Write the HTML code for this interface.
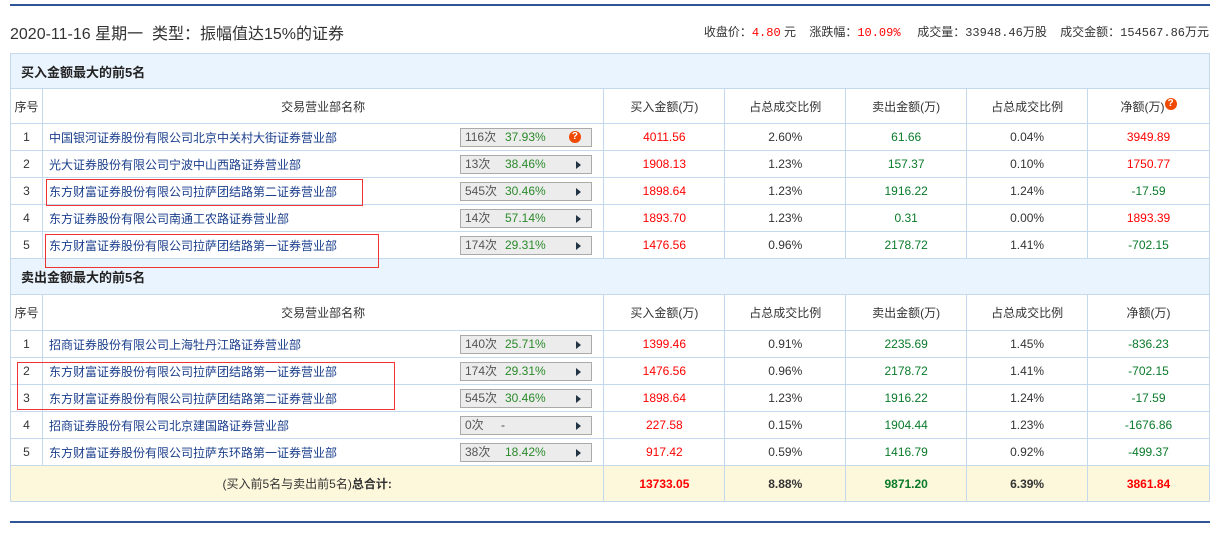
<!DOCTYPE html><html><head><meta charset="utf-8"><style>
body{margin:0;width:1219px;height:533px;background:#fff;font-family:"Liberation Sans","Noto Sans CJK SC",sans-serif;font-size:12px;color:#333;position:relative;overflow:hidden}
.line{position:absolute;left:10px;width:1200px;height:2px;background:#2f5597}
.title{position:absolute;left:10px;top:20px;font-size:16px;color:#333}
.info{position:absolute;right:10px;top:23px;font-size:12px;color:#333}
.info b{font-weight:normal;font-family:"Liberation Mono","Noto Sans CJK SC",monospace;color:#f00}
.info i{font-style:normal;font-family:"Liberation Mono","Noto Sans CJK SC",monospace}
table{position:absolute;left:10px;top:53px;border-collapse:collapse;width:1200px}
td{border:1px solid #c5d9ec;text-align:center;height:26px;padding:0;font-size:12px}
td.n{text-align:left;padding-left:6px;color:#1a3e8c;position:relative}
.sec td{background:#eaf4fe;text-align:left;padding-left:10px;font-weight:bold;height:34px;font-size:13px;color:#222}
.hd td{height:34px;color:#333}
.s2 td{height:35px}
.btn{position:absolute;left:417px;top:4px;border:1px solid #aaa;background:#ececec;font-size:12px;line-height:17px;color:#555;padding-left:4px;box-sizing:border-box;width:132px;height:19px}
.btn .p{position:absolute;left:44px;color:#2a8a2a}
.btn .a{position:absolute;right:10px;top:5px;width:0;height:0;border-left:5px solid #234;border-top:4px solid transparent;border-bottom:4px solid transparent}
.q{position:absolute;right:10px;top:2px;width:12px;height:12px;border-radius:6px;background:#f04a00;color:#fff;font-size:10px;line-height:12px;text-align:center;font-weight:bold}
.r{color:#f00}.g{color:#0a7a2a}
.tot td{background:#fdf8dc;font-weight:bold;height:35px}
.box{position:absolute;border:1px solid #e33}
</style></head><body>
<div class="line" style="top:4px"></div>
<div class="title">2020-11-16 星期一&nbsp; 类型：振幅值达15%的证券</div>
<div class="info">收盘价：<b>4.80</b> 元 &nbsp;&nbsp; 涨跌幅：<b>10.09%</b> &nbsp;&nbsp;&nbsp; 成交量：<i>33948.46</i>万股 &nbsp;&nbsp; 成交金额：<i>154567.86</i>万元</div>
<table>
<colgroup><col style="width:32px"><col style="width:562px"><col style="width:121px"><col style="width:121px"><col style="width:121px"><col style="width:121px"><col style="width:122px"></colgroup>
<tr class="sec"><td colspan="7">买入金额最大的前5名</td></tr>
<tr class="hd"><td>序号</td><td>交易营业部名称</td><td>买入金额(万)</td><td>占总成交比例</td><td>卖出金额(万)</td><td>占总成交比例</td><td>净额(万)<span style="display:inline-block;width:12px;height:12px;border-radius:6px;background:#f04a00;color:#fff;font-size:10px;line-height:12px;font-weight:bold;vertical-align:top">?</span></td></tr>
<tr><td>1</td><td class="n">中国银河证券股份有限公司北京中关村大街证券营业部<div class="btn">116次<span class="p">37.93%</span><span class="q">?</span></div></td><td class="r">4011.56</td><td>2.60%</td><td class="g">61.66</td><td>0.04%</td><td class="r">3949.89</td></tr>
<tr><td>2</td><td class="n">光大证券股份有限公司宁波中山西路证券营业部<div class="btn">13次<span class="p">38.46%</span><span class="a"></span></div></td><td class="r">1908.13</td><td>1.23%</td><td class="g">157.37</td><td>0.10%</td><td class="r">1750.77</td></tr>
<tr><td>3</td><td class="n">东方财富证券股份有限公司拉萨团结路第二证券营业部<div class="btn">545次<span class="p">30.46%</span><span class="a"></span></div></td><td class="r">1898.64</td><td>1.23%</td><td class="g">1916.22</td><td>1.24%</td><td class="g">-17.59</td></tr>
<tr><td>4</td><td class="n">东方证券股份有限公司南通工农路证券营业部<div class="btn">14次<span class="p r">57.14%</span><span class="a"></span></div></td><td class="r">1893.70</td><td>1.23%</td><td class="g">0.31</td><td>0.00%</td><td class="r">1893.39</td></tr>
<tr><td>5</td><td class="n">东方财富证券股份有限公司拉萨团结路第一证券营业部<div class="btn">174次<span class="p">29.31%</span><span class="a"></span></div></td><td class="r">1476.56</td><td>0.96%</td><td class="g">2178.72</td><td>1.41%</td><td class="g">-702.15</td></tr>
<tr class="sec s2"><td colspan="7">卖出金额最大的前5名</td></tr>
<tr class="hd s2"><td>序号</td><td>交易营业部名称</td><td>买入金额(万)</td><td>占总成交比例</td><td>卖出金额(万)</td><td>占总成交比例</td><td>净额(万)</td></tr>
<tr><td>1</td><td class="n">招商证券股份有限公司上海牡丹江路证券营业部<div class="btn">140次<span class="p">25.71%</span><span class="a"></span></div></td><td class="r">1399.46</td><td>0.91%</td><td class="g">2235.69</td><td>1.45%</td><td class="g">-836.23</td></tr>
<tr><td>2</td><td class="n">东方财富证券股份有限公司拉萨团结路第一证券营业部<div class="btn">174次<span class="p">29.31%</span><span class="a"></span></div></td><td class="r">1476.56</td><td>0.96%</td><td class="g">2178.72</td><td>1.41%</td><td class="g">-702.15</td></tr>
<tr><td>3</td><td class="n">东方财富证券股份有限公司拉萨团结路第二证券营业部<div class="btn">545次<span class="p">30.46%</span><span class="a"></span></div></td><td class="r">1898.64</td><td>1.23%</td><td class="g">1916.22</td><td>1.24%</td><td class="g">-17.59</td></tr>
<tr><td>4</td><td class="n">招商证券股份有限公司北京建国路证券营业部<div class="btn">0次<span class="p" style="left:40px;color:#444">-</span><span class="a"></span></div></td><td class="r">227.58</td><td>0.15%</td><td class="g">1904.44</td><td>1.23%</td><td class="g">-1676.86</td></tr>
<tr><td>5</td><td class="n">东方财富证券股份有限公司拉萨东环路第一证券营业部<div class="btn">38次<span class="p">18.42%</span><span class="a"></span></div></td><td class="r">917.42</td><td>0.59%</td><td class="g">1416.79</td><td>0.92%</td><td class="g">-499.37</td></tr>
<tr class="tot"><td colspan="2" style="font-weight:normal">(买入前5名与卖出前5名)<b>总合计:</b></td><td class="r">13733.05</td><td>8.88%</td><td class="g">9871.20</td><td>6.39%</td><td class="r">3861.84</td></tr>
</table>
<div class="box" style="left:46px;top:179px;width:315px;height:25px"></div>
<div class="box" style="left:45px;top:234px;width:332px;height:32px"></div>
<div class="box" style="left:17px;top:362px;width:376px;height:46px"></div>
<div class="line" style="top:521px"></div>
</body></html>
